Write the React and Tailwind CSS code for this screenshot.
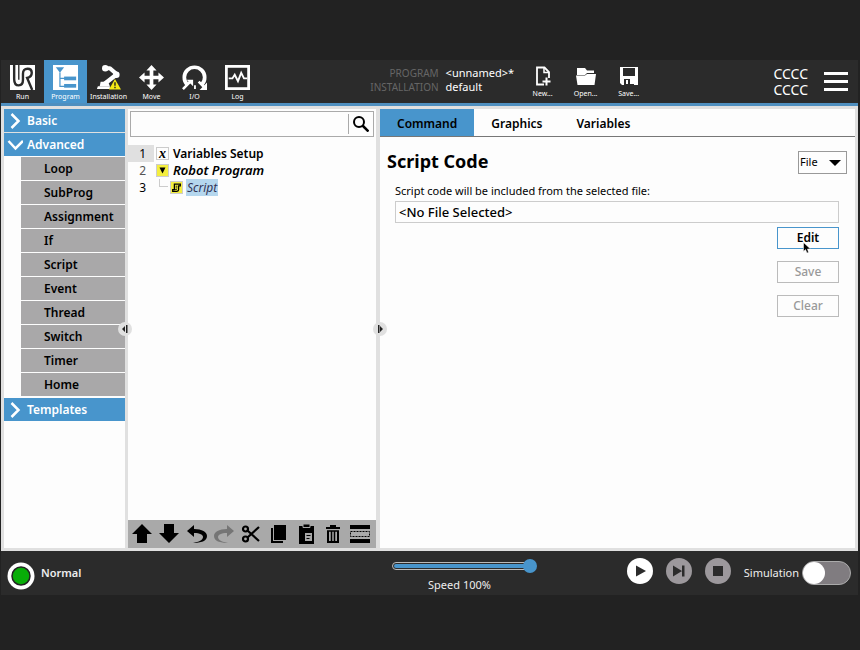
import React, { useState } from "react";
import clsx from "clsx";

const RunIcon = () => (
  <svg viewBox="0 0 27 27" className="h-[27px] w-[27px]">
    <rect width="27" height="27" fill="#fff" />
    <path
      d="M4.500 0v15q0 7 5 7q4.500 0 4.500-6V9.500q0-5.500 5-5.500q4.500 0 4.500 4.500t-5 5.500l5.500 13"
      fill="none"
      stroke="#2b2b2b"
      strokeWidth="2.600"
    />
    <path d="M9.500 0v16" stroke="#2b2b2b" strokeWidth="1.500" />
  </svg>
);

const ProgramIcon = () => (
  <svg viewBox="0 0 27 27" className="h-[27px] w-[27px]">
    <rect width="27" height="27" fill="#fff" />
    <path d="M3 2.500h9L7.500 8.500z" fill="#4895cc" />
    <path d="M7.500 8v15H13M7.500 14.500H13" fill="none" stroke="#4895cc" strokeWidth="1.300" />
    <rect x="12" y="12.500" width="13" height="4" fill="#4895cc" />
    <rect x="12" y="20.500" width="13" height="4" fill="#4895cc" />
  </svg>
);

const InstallationIcon = () => (
  <svg viewBox="0 0 27 27" className="h-[27px] w-[27px]">
    <path d="M9 3.500h6L22.500 10L9 20.500" fill="none" stroke="#fff" strokeWidth="4.500" strokeLinejoin="round" />
    <circle cx="10" cy="3.500" r="3.500" fill="#fff" />
    <circle cx="22" cy="10.500" r="3.500" fill="#fff" />
    <path d="M5 18h8l2 5H4z" fill="#fff" />
    <path d="M2 23h13v3H1z" fill="#fff" />
    <path d="M20.500 15L27 26.500H14z" fill="#f5ea14" />
    <path d="M20.500 18.500v4M20.500 23.500v1.500" stroke="#222" strokeWidth="1.500" />
  </svg>
);

const MoveIcon = () => (
  <svg viewBox="0 0 27 27" className="h-[27px] w-[27px]">
    <path
      d="M13.500 0l5.500 6h-3.500v5.500H21V8l6 5.500l-6 5.500v-3.500h-5.500V21H19l-5.500 6L8 21h3.500v-5.500H6V19l-6-5.500L6 8v3.500h5.500V6H8z"
      fill="#fff"
    />
  </svg>
);

const IoIcon = () => (
  <svg viewBox="0 0 27 27" className="h-[27px] w-[27px]">
    <path d="M5.500 21A11 11 0 1 1 21.500 21" fill="none" stroke="#fff" strokeWidth="4" />
    <path d="M1 26L9 18M18 18l6 6" fill="none" stroke="#fff" strokeWidth="2.800" />
    <path d="M5 16h7v7zM27 19v8h-8z" fill="#fff" />
    <path d="M13 24h2" stroke="#fff" strokeWidth="4" />
  </svg>
);

const LogIcon = () => (
  <svg viewBox="0 0 27 27" className="h-[27px] w-[27px]">
    <rect x="1.500" y="1.500" width="24" height="24" fill="none" stroke="#fff" strokeWidth="3" />
    <path d="M4 14.500h4l2.500-4l3.500 7l3.500-9l3 6H24" fill="none" stroke="#fff" strokeWidth="2" />
  </svg>
);

const NewIcon = () => (
  <svg viewBox="0 0 20 20" className="h-5 w-5">
    <path d="M11 18.500H4V1.500h7.500L16 6v6" fill="none" stroke="#fff" strokeWidth="1.800" />
    <path d="M11 1v5.500h5" fill="none" stroke="#fff" strokeWidth="1.500" />
    <path d="M13.500 11.500v8M9.500 15.500h8" stroke="#fff" strokeWidth="2" />
  </svg>
);

const OpenIcon = () => (
  <svg viewBox="0 0 20 20" className="h-5 w-5">
    <path d="M1 8V2h8l2 2.500h7V7h-7L9 9H1z" fill="#fff" />
    <path d="M0 9.500h9L11 8h9l-1.500 11H1.500z" fill="#fff" />
  </svg>
);

const SaveIcon = () => (
  <svg viewBox="0 0 20 20" className="h-5 w-5">
    <path d="M1 1h18v18H3l-2-2z" fill="#fff" />
    <path d="M4 2h12v8H4zM5 13h10v6H5z" fill="#2b2b2b" />
    <path d="M7 14h2v4H7zM11 13h4v5h-4z" fill="#fff" />
  </svg>
);

const NAV_ITEMS = [
  { label: "Run", Icon: RunIcon },
  { label: "Program", Icon: ProgramIcon },
  { label: "Installation", Icon: InstallationIcon },
  { label: "Move", Icon: MoveIcon },
  { label: "I/O", Icon: IoIcon },
  { label: "Log", Icon: LogIcon },
];

const FILE_ACTIONS = [
  { label: "New...", Icon: NewIcon },
  { label: "Open...", Icon: OpenIcon },
  { label: "Save...", Icon: SaveIcon },
];

const ADVANCED_NODES = [
  "Loop",
  "SubProg",
  "Assignment",
  "If",
  "Script",
  "Event",
  "Thread",
  "Switch",
  "Timer",
  "Home",
];

const TREE_TOOLS = [
  { label: "Move up", icon: <path d="M10 0l10 10h-5v9H5v-9H0z" /> },
  { label: "Move down", icon: <path d="M5 0h10v9h5L10 19L0 9h5z" /> },
  {
    label: "Undo",
    icon: <path d="M7 1v4c8 0 13 3 13 7c0 5-6 7-14 7c6-1 10-3 10-6c0-2-3-4-9-4v4L0 7z" />,
  },
  {
    label: "Redo",
    disabled: true,
    icon: <path d="M13 1v4C5 5 0 8 0 12c0 5 6 7 14 7c-6-1-10-3-10-6c0-2 3-4 9-4v4l7-6z" />,
  },
  {
    label: "Cut",
    icon: (
      <g fill="none" stroke="#000" strokeWidth="2.200">
        <circle cx="4.500" cy="5" r="2.500" />
        <circle cx="4.500" cy="15" r="2.500" />
        <path d="M6.500 6.500L18 17M6.500 13.500L18 3" />
      </g>
    ),
  },
  {
    label: "Copy",
    icon: (
      <>
        <path d="M6 1h12v15H6z" />
        <path d="M3 4h2v13h10v2H3z" />
      </>
    ),
  },
  {
    label: "Paste",
    icon: (
      <>
        <path d="M3 2h15v18H3z" />
        <path d="M7 0h7v3.500H7z" stroke="#a9a9a9" />
        <path d="M9 9h7v8H9z" fill="#a9a9a9" />
        <path d="M10.500 11.500h4M10.500 14.500h3" stroke="#000" />
      </>
    ),
  },
  {
    label: "Delete",
    icon: (
      <>
        <path d="M3 3h14v2H3zM7 1h6v2H7z" />
        <path d="M5 7v11h10V7" fill="none" stroke="#000" strokeWidth="2" />
        <path d="M8.500 7v10M11.500 7v10M4 7h12" stroke="#000" strokeWidth="1.500" />
      </>
    ),
  },
  {
    label: "Suppress",
    icon: (
      <>
        <path d="M0 1h20v4H0zM0 15h20v4H0z" />
        <path d="M.5 7.500h19v5H.5z" fill="none" stroke="#000" strokeDasharray="2 1" />
      </>
    ),
  },
];

const TABS = ["Command", "Graphics", "Variables"];

function Header() {
  return (
    <header className="flex items-stretch border-b-[3px] border-[#4f8fbf] bg-[#2b2b2b] text-white">
      <nav className="flex">
        {NAV_ITEMS.map(({ label, Icon }) => (
          <button
            key={label}
            className={clsx(
              "flex h-[43px] w-[43px] flex-col items-center gap-px pt-[5px] text-[7px] leading-[12px]",
              label === "Program" && "bg-[#4895cc]"
            )}
          >
            <Icon />
            <span>{label}</span>
          </button>
        ))}
      </nav>
      <div className="mr-3 ml-auto flex">
        <dl className="grid grid-cols-[auto_auto] content-center items-center gap-x-[7px] pb-1 text-[11px] leading-[14px]">
          <dt className="text-right text-[10px] text-[#666]">PROGRAM</dt>
          <dd>&lt;unnamed&gt;*</dd>
          <dt className="text-right text-[10px] text-[#666]">INSTALLATION</dt>
          <dd>default</dd>
        </dl>
        <div className="ml-[7px] flex">
          {FILE_ACTIONS.map(({ label, Icon }) => (
            <button
              key={label}
              className="flex w-[43px] flex-col items-center gap-px pt-1.5 text-[7px] leading-[14px]"
            >
              <Icon />
              <span>{label}</span>
            </button>
          ))}
        </div>
      </div>
      <div className="ml-auto flex items-center gap-4 pr-[10px]">
        <p className="text-[14px] leading-4">
          CCCC
          <br />
          CCCC
        </p>
        <button aria-label="Menu" className="flex w-6 flex-col gap-[5px]">
          <span className="h-[3px] bg-white" />
          <span className="h-[3px] bg-white" />
          <span className="h-[3px] bg-white" />
        </button>
      </div>
    </header>
  );
}

function CategoryButton({ label, open }) {
  return (
    <button
      aria-expanded={open}
      className="flex h-[23px] w-full items-center gap-1 bg-[#4895cc] pl-[3px] text-[12px] font-semibold text-white"
    >
      <svg viewBox="0 0 16 16" className="h-4 w-4" fill="none" stroke="#fff" strokeWidth="2.500">
        <path d={open ? "M1.500 4l7 7.500L16 4" : "M4.500 1l7 7l-7 7"} />
      </svg>
      {label}
    </button>
  );
}

function NodeSidebar() {
  return (
    <aside className="relative w-[121px] shrink-0 bg-[#fdfdfd] text-[12px]">
      <div className="flex flex-col gap-px bg-[#e0e0e0]">
        <CategoryButton label="Basic" open={false} />
        <CategoryButton label="Advanced" open />
      </div>
      <ul className="flex flex-col gap-px bg-[#fdfdfd] pt-px pb-0.5 pl-[17px]">
        {ADVANCED_NODES.map((name) => (
          <li key={name}>
            <button className="h-[23px] w-full bg-[#a9a8a9] pl-[23px] text-left font-semibold text-black">
              {name}
            </button>
          </li>
        ))}
      </ul>
      <CategoryButton label="Templates" open={false} />
      <button
        aria-label="Collapse node list"
        className="absolute top-1/2 -right-[7px] z-10 flex h-3.5 w-3.5 -translate-y-1/2 items-center justify-center rounded-full bg-[#e0e0e0]"
      >
        <svg viewBox="0 0 8 8" className="h-2 w-2">
          <path d="M4 1v6L1 4zM5 0h1.500v8H5z" fill="#222" />
        </svg>
      </button>
    </aside>
  );
}

function ProgramTree() {
  return (
    <section className="flex w-[248px] shrink-0 flex-col bg-[#fdfdfd] text-[12px]">
      <div className="mx-0.5 mt-0.5 flex h-[26px] border border-[#aaa]">
        <input aria-label="Search program" className="min-w-0 flex-1 px-1 outline-none" />
        <button aria-label="Search" className="my-0.5 flex w-[25px] items-center justify-center border-l border-[#aaa]">
          <svg viewBox="0 0 16 16" className="h-4 w-4" fill="none" stroke="#000">
            <circle cx="6" cy="6" r="5" strokeWidth="2" />
            <path d="M9.500 9.500L15.500 15.500" strokeWidth="2.500" />
          </svg>
        </button>
      </div>
      <ol className="mt-2 flex-1 text-black">
        <li className="flex h-[17px] items-center">
          <span className="h-full w-[26px] bg-[#e0e0e0] pr-2 text-right leading-[17px]">1</span>
          <span className="ml-0.5 flex h-[13px] w-[13px] items-center justify-center border border-[#ccc] font-['Liberation_Serif',serif] text-[14px] leading-[10px] font-bold italic">
            x
          </span>
          <span className="ml-1 font-semibold">Variables Setup</span>
        </li>
        <li className="flex h-[17px] items-center">
          <span className="w-[26px] pr-2 text-right text-[#555]">2</span>
          <svg viewBox="0 0 13 13" className="ml-0.5 h-[13px] w-[13px] border border-[#ccc] bg-[#f4ee3f]">
            <path d="M3 3h7L6.500 10z" />
          </svg>
          <span className="ml-1 text-[13px] font-semibold italic">Robot Program</span>
        </li>
        <li className="flex h-[17px] items-center">
          <span className="w-[26px] pr-2 text-right">3</span>
          <span className="mb-[9px] ml-[5px] h-2 w-[9px] border-b border-l border-[#ccc]" />
          <svg viewBox="0 0 13 13" className="ml-0.5 h-[13px] w-[13px] border border-[#ccc] bg-[#f4ee3f]">
            <path d="M4 2.500h7v2H9V9q0 2-2 2H2V9h2z" fill="none" stroke="#000" strokeWidth="1.500" />
            <path d="M5.500 5h2M5.500 7h2M4 9h3" stroke="#000" />
          </svg>
          <span className="ml-[3px] bg-[#b5d7ee] px-px leading-[17px] text-[#335] italic">Script</span>
        </li>
      </ol>
      <div className="flex h-7 items-center justify-between bg-[#a9a9a9] pr-1.5 pl-1">
        {TREE_TOOLS.map(({ label, icon, disabled }) => (
          <button key={label} aria-label={label} disabled={disabled} className="disabled:opacity-30">
            <svg viewBox="0 0 20 20" className="h-5 w-5">
              {icon}
            </svg>
          </button>
        ))}
      </div>
    </section>
  );
}

function CommandPanel() {
  const [activeTab, setActiveTab] = useState("Command");

  return (
    <section className="relative flex min-w-0 flex-1 flex-col bg-[#fdfdfd] text-black">
      <div role="tablist" className="flex h-7 border-b border-[#777]">
        {TABS.map((tab) => (
          <button
            key={tab}
            role="tab"
            aria-selected={tab === activeTab}
            onClick={() => setActiveTab(tab)}
            className={clsx("px-[17px] pt-[3px] text-[12px] font-semibold", tab === activeTab && "bg-[#4895cc]")}
          >
            {tab}
          </button>
        ))}
      </div>
      <div className="flex items-start justify-between pt-[14px] pr-2 pl-[7px]">
        <h1 className="text-[18px] leading-5 font-bold">Script Code</h1>
        <div className="grid items-center">
          <select
            aria-label="Source"
            className="col-start-1 row-start-1 h-[23px] w-[49px] appearance-none border border-[#999] pl-px text-[11px]"
          >
            <option>File</option>
          </select>
          <svg viewBox="0 0 12 6" className="pointer-events-none col-start-1 row-start-1 mr-1.5 h-1.5 w-3 justify-self-end">
            <path d="M0 0h12L6 6z" />
          </svg>
        </div>
      </div>
      <div className="flex flex-col pt-[9px] pr-4 pl-[15px]">
        <label htmlFor="script-file" className="text-[11px] leading-4">
          Script code will be included from the selected file:
        </label>
        <input
          id="script-file"
          readOnly
          value="<No File Selected>"
          className="mt-0.5 h-[22px] border border-[#ccc] px-[3px] text-[13px] font-medium outline-none"
        />
        <div className="mt-1 flex flex-col items-end gap-3 text-[12px]">
          <button className="relative h-[22px] w-[62px] border border-[#4895cc] font-semibold">
            Edit
            <svg viewBox="0 0 8 12" className="absolute top-3.5 left-[25px] h-3 w-2">
              <path d="M.5 .5v9l2-2L4 11l1.500-.5L4.500 7H7.500z" stroke="#fff" strokeWidth=".5" />
            </svg>
          </button>
          <button disabled className="h-[22px] w-[62px] border border-[#bbb] font-medium text-[#999]">
            Save
          </button>
          <button disabled className="h-[22px] w-[62px] border border-[#bbb] font-medium text-[#999]">
            Clear
          </button>
        </div>
      </div>
      <button
        aria-label="Collapse program tree"
        className="absolute top-1/2 -left-[7px] z-10 flex h-3.5 w-3.5 -translate-y-1/2 items-center justify-center rounded-full bg-[#e0e0e0]"
      >
        <svg viewBox="0 0 8 8" className="h-2 w-2">
          <path d="M4 1v6L7 4zM2 0h1.500v8H2z" fill="#222" />
        </svg>
      </button>
    </section>
  );
}

function Footer() {
  const [speed, setSpeed] = useState(100);
  const [simulation, setSimulation] = useState(false);

  return (
    <footer className="grid h-11 grid-cols-[1fr_auto_1fr] items-center bg-[#2b2b2b] text-[11px] text-[#eee]">
      <div className="flex items-center gap-[6px] pl-1.5">
        <svg viewBox="0 0 28 28" className="mt-1.5 h-7 w-7">
          <circle cx="14" cy="14" r="13.500" fill="#fff" />
          <circle cx="14" cy="14" r="9" fill="#08ad08" stroke="#222" strokeWidth="1.500" />
        </svg>
        <span className="font-semibold">Normal</span>
      </div>
      <div className="ml-[70px] flex w-[145px] flex-col gap-1 pt-1.5">
        <div className="grid items-center">
          <div className="col-start-1 row-start-1 mr-[7px] h-2 rounded-full border border-[#bbb] p-px">
            <div className="h-full rounded-full bg-[#4895cc]" style={{ width: `${speed}%` }} />
          </div>
          <input
            id="speed"
            type="range"
            value={speed}
            onChange={(e) => setSpeed(Number(e.target.value))}
            className="col-start-1 row-start-1 h-3.5 w-full appearance-none bg-transparent [&::-webkit-slider-thumb]:h-3.5 [&::-webkit-slider-thumb]:w-3.5 [&::-webkit-slider-thumb]:appearance-none [&::-webkit-slider-thumb]:rounded-full [&::-webkit-slider-thumb]:bg-[#4895cc]"
          />
        </div>
        <label htmlFor="speed" className="mr-2.5 text-center leading-4">
          Speed {speed}%
        </label>
      </div>
      <div className="flex items-center justify-end pr-[7px] pb-1">
        <div className="flex gap-[13px]">
          <button aria-label="Play">
            <svg viewBox="0 0 26 26" className="h-[26px] w-[26px]">
              <circle cx="13" cy="13" r="13" fill="#fff" />
              <path d="M9 7.500v11l10-5.500z" fill="#2b2b2b" />
            </svg>
          </button>
          <button aria-label="Step">
            <svg viewBox="0 0 26 26" className="h-[26px] w-[26px]">
              <circle cx="13" cy="13" r="13" fill="#9c989c" />
              <path d="M7 7.500v11l9-5.500zM16 7.500h2.500v11H16z" fill="#2b2b2b" />
            </svg>
          </button>
          <button aria-label="Stop">
            <svg viewBox="0 0 26 26" className="h-[26px] w-[26px]">
              <circle cx="13" cy="13" r="13" fill="#9c989c" />
              <path d="M8 8h10v10H8z" fill="#2b2b2b" />
            </svg>
          </button>
        </div>
        <label className="mt-1 ml-[13px] flex items-center gap-[3px]">
          Simulation
          <input
            type="checkbox"
            role="switch"
            checked={simulation}
            onChange={(e) => setSimulation(e.target.checked)}
            className="flex h-6 w-[49px] appearance-none items-center rounded-full border border-[#aaa] bg-[#807c80] before:h-[22px] before:w-[22px] before:rounded-full before:bg-white checked:justify-end"
          />
        </label>
      </div>
    </footer>
  );
}

export default function App() {
  return (
    <div className="flex min-h-screen flex-col bg-[#222] pt-[60px] pr-0.5 pb-[55px] pl-px font-['Noto_Sans',sans-serif]">
      <Header />
      <main className="flex flex-1 bg-[#e0e0e0] p-[3px]">
        <NodeSidebar />
        <div className="w-[3px] shrink-0" />
        <ProgramTree />
        <div className="w-1 shrink-0" />
        <CommandPanel />
      </main>
      <Footer />
    </div>
  );
}
